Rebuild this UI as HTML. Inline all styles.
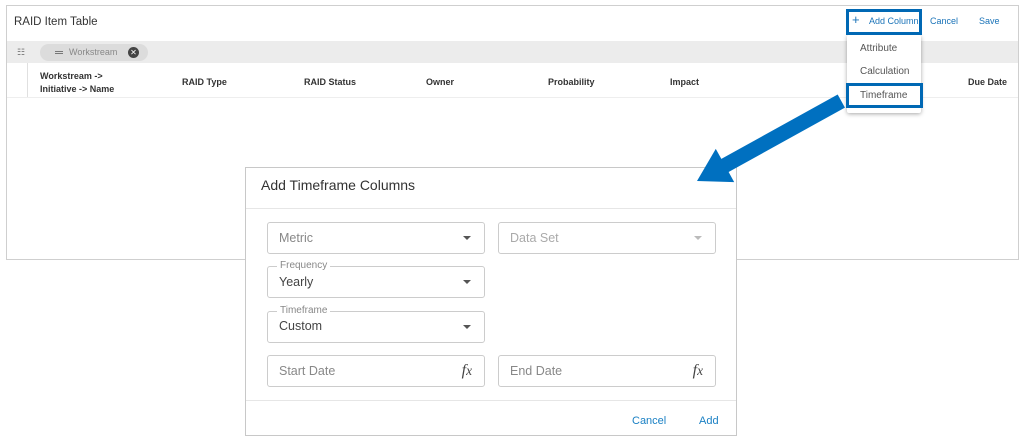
<!DOCTYPE html><html><head><style>
body{margin:0;width:1024px;height:441px;background:#fff;font-family:"Liberation Sans",sans-serif;position:relative;overflow:hidden}
.a{position:absolute}
.panel{left:6px;top:5px;width:1011px;height:253px;border:1px solid #cfcfcf}
.t{font-size:11px;color:#333}
.h{font-size:9px;font-weight:bold;color:#333}
.fld{position:absolute;border:1px solid #ccc;border-radius:3px;height:30px;width:216px}
.fld span{position:absolute;left:11px;font-size:12.5px}
.lbl{position:absolute;top:-7px;left:9px;background:#fff;padding:0 3px;font-size:10px;color:#888}
.caret{position:absolute;right:13px;top:13px;width:0;height:0;border-left:4px solid transparent;border-right:4px solid transparent;border-top:4px solid #555}
.fx{position:absolute;right:12px;top:6px;font-family:"Liberation Serif",serif;font-style:italic;font-size:16px;color:#444}
</style></head><body>
<div class="a panel"></div>
<div class="a t" style="left:14px;top:16px;font-size:11.5px">RAID Item Table</div>
<div class="a" style="left:7px;top:41px;width:1011px;height:22px;background:#ececec"></div>
<div class="a" style="left:17px;top:47px;font-size:9px;color:#777">☷</div>
<div class="a" style="left:40px;top:44px;width:108px;height:17px;background:#dcdcdc;border-radius:9px"></div>
<div class="a" style="left:55px;top:51px;width:8px;height:1px;border-top:1px solid #777;border-bottom:1px solid #777;height:1px"></div>
<div class="a" style="left:69px;top:47px;font-size:9px;color:#888">Workstream</div>
<div class="a" style="left:128px;top:47px;width:11px;height:11px;border-radius:50%;background:#444;color:#fff;font-size:8px;line-height:11px;text-align:center">✕</div>
<div class="a" style="left:27px;top:63px;width:1px;height:35px;background:#e0e0e0"></div>
<div class="a" style="left:7px;top:97px;width:1011px;height:1px;background:#eee"></div>
<div class="a h" style="left:40px;top:70px;line-height:13px">Workstream -&gt;<br>Initiative -&gt; Name</div>
<div class="a h" style="left:182px;top:77px">RAID Type</div>
<div class="a h" style="left:304px;top:77px">RAID Status</div>
<div class="a h" style="left:426px;top:77px">Owner</div>
<div class="a h" style="left:548px;top:77px">Probability</div>
<div class="a h" style="left:670px;top:77px">Impact</div>
<div class="a h" style="left:968px;top:77px">Due Date</div>
<div class="a" style="left:930px;top:16px;font-size:9px;color:#1a73b8">Cancel</div>
<div class="a" style="left:979px;top:16px;font-size:9px;color:#1a73b8">Save</div>
<div class="a" style="left:847px;top:35px;width:74px;height:78px;background:#fff;box-shadow:0 1px 4px rgba(0,0,0,.35);border-radius:2px"></div>
<div class="a" style="left:846px;top:9px;width:70px;height:20px;border:3px solid #0068b4"></div>
<div class="a" style="left:852px;top:12px;font-size:13px;color:#1a73b8">+</div>
<div class="a" style="left:869px;top:16px;font-size:9px;color:#1a73b8">Add Column</div>
<div class="a" style="left:860px;top:43px;font-size:10px;color:#555">Attribute</div>
<div class="a" style="left:860px;top:66px;font-size:10px;color:#555">Calculation</div>
<div class="a" style="left:846px;top:83px;width:71px;height:19px;border:3px solid #0068b4"></div>
<div class="a" style="left:860px;top:90px;font-size:10px;color:#555">Timeframe</div>
<div class="a" style="left:245px;top:167px;width:490px;height:267px;background:#fff;border:1px solid #c8c8c8"></div>
<svg class="a" style="left:0;top:0" width="1024" height="441"><polygon transform="translate(697,181) rotate(-29)" points="0,0 32,-19 32,-7.5 165,-7.5 165,7.5 32,7.5 32,19" fill="#0070c0"/></svg>
<div class="a" style="left:261px;top:177px;font-size:14px;color:#333">Add Timeframe Columns</div>
<div class="a" style="left:246px;top:208px;width:490px;height:1px;background:#e6e6e6"></div>
<div class="fld" style="left:267px;top:222px"><span style="top:8px;color:#888">Metric</span><div class="caret"></div></div>
<div class="fld" style="left:498px;top:222px"><span style="top:8px;color:#aaa">Data Set</span><div class="caret" style="border-top-color:#bbb"></div></div>
<div class="fld" style="left:267px;top:266px"><div class="lbl">Frequency</div><span style="top:8px;color:#444">Yearly</span><div class="caret"></div></div>
<div class="fld" style="left:267px;top:311px"><div class="lbl">Timeframe</div><span style="top:7px;color:#444">Custom</span><div class="caret"></div></div>
<div class="fld" style="left:267px;top:355px"><span style="top:8px;color:#888">Start Date</span><div class="fx">f<small>x</small></div></div>
<div class="fld" style="left:498px;top:355px"><span style="top:8px;color:#888">End Date</span><div class="fx">f<small>x</small></div></div>
<div class="a" style="left:246px;top:400px;width:490px;height:1px;background:#e6e6e6"></div>
<div class="a" style="left:632px;top:415px;font-size:11px;color:#1a80c4">Cancel</div>
<div class="a" style="left:699px;top:415px;font-size:11px;color:#1a80c4">Add</div>
</body></html>
